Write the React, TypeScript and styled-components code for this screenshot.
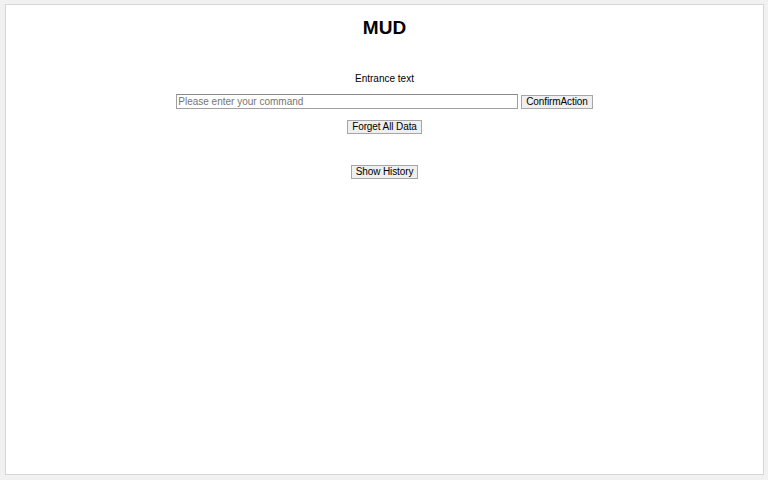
import React, { useState } from "react";
import styled, { createGlobalStyle } from "styled-components";

const Global = createGlobalStyle`
  html, body {
    margin: 0;
    padding: 0;
    background: #f1f1f1;
    font-family: "Liberation Sans", Arial, sans-serif;
  }
`;

const Page = styled.div`
  padding: 4px 4px 5px 5px;
`;

const Panel = styled.main`
  box-sizing: border-box;
  height: 471px;
  background: #ffffff;
  border: 1px solid #d6d6d6;
  display: flex;
  flex-direction: column;
  align-items: center;
`;

const Title = styled.h1`
  margin: 12px 0 0;
  font-size: 19px;
  font-weight: bold;
  line-height: 22px;
  color: #000;
`;

const Entrance = styled.p`
  margin: 34px 0 0;
  font-size: 10px;
  line-height: 12px;
  color: #000;
`;

const CommandRow = styled.form`
  display: flex;
  align-items: center;
  gap: 3px;
  margin-top: 9px;
`;

const CommandInput = styled.input`
  box-sizing: border-box;
  width: 342px;
  height: 15px;
  padding: 0 1px;
  border: 1px solid #a0a0a0;
  border-top-color: #8a8a8a;
  font-family: "Liberation Sans", Arial, sans-serif;
  font-size: 10px;
  color: #000;
  outline: none;
  &::placeholder {
    color: #757575;
  }
`;

const Button = styled.button<{ $top?: number }>`
  box-sizing: border-box;
  height: 14px;
  margin-top: ${(p) => p.$top ?? 0}px;
  padding: 0 4px;
  background: #efefef;
  border: 1px solid #a6a6a6;
  border-radius: 0;
  font-family: "Liberation Sans", Arial, sans-serif;
  font-size: 10px;
  line-height: 12px;
  letter-spacing: -0.1px;
  color: #000;
  cursor: pointer;
`;

export default function App() {
  const [command, setCommand] = useState("");
  return (
    <>
      <Global />
      <Page>
        <Panel>
          <Title>MUD</Title>
          <Entrance>Entrance text</Entrance>
          <CommandRow onSubmit={(e) => e.preventDefault()}>
            <CommandInput
              placeholder="Please enter your command"
              value={command}
              onChange={(e) => setCommand(e.target.value)}
            />
            <Button type="submit">ConfirmAction</Button>
          </CommandRow>
          <Button $top={11}>Forget All Data</Button>
          <Button $top={31}>Show History</Button>
        </Panel>
      </Page>
    </>
  );
}
